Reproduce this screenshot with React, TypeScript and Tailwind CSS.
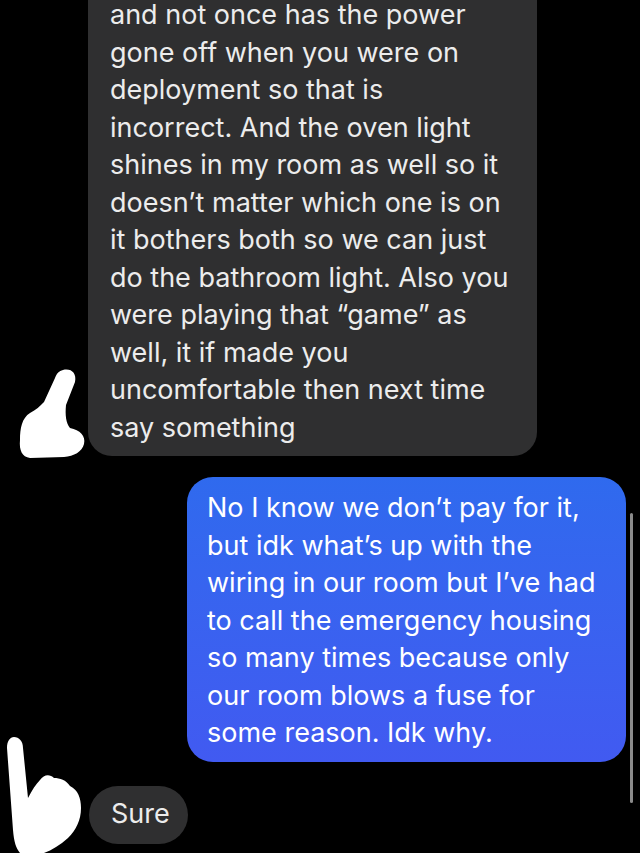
import React from 'react'

const received = [
  'and not once has the power',
  'gone off when you were on',
  'deployment so that is',
  'incorrect. And the oven light',
  'shines in my room as well so it',
  'doesn’t matter which one is on',
  'it bothers both so we can just',
  'do the bathroom light. Also you',
  'were playing that “game” as',
  'well, it if made you',
  'uncomfortable then next time',
  'say something',
]

const sent = [
  'No I know we don’t pay for it,',
  'but idk what’s up with the',
  'wiring in our room but I’ve had',
  'to call the emergency housing',
  'so many times because only',
  'our room blows a fuse for',
  'some reason. Idk why.',
]

function Scribbles() {
  return (
    <svg className="absolute left-0 top-0 pointer-events-none" width="640" height="853" viewBox="0 0 640 853">
      {/* top redaction */}
      <path
        d="M63 370 C71 368 77 373 75 382 L66 405 C65 415 66 423 70 428 C80 430 86 436 84 444 C82 452 74 456 64 457 L30 458 C22 457 19 450 20 440 C20 428 22 418 30 413 C36 410 40 406 44 402 L55 378 C57 373 59 371 63 370 Z"
        fill="#fff"
      />
      {/* bottom redaction */}
      <path
        d="M14 737 C19 737 23 741 23 748 L28 798 C32 790 36 784 40 780 C44 774 50 774 54 778 C60 778 66 780 70 786 C78 790 81 798 81 808 C81 820 76 830 68 838 C60 845 52 850 44 853 L20 853 C16 848 14 842 13 830 L7 748 C7 741 10 737 14 737 Z"
        fill="#fff"
      />
    </svg>
  )
}

export default function App() {
  return (
    <div className="relative w-[640px] h-[853px] overflow-hidden bg-black font-['Inter','Liberation_Sans',sans-serif]">
      <div className="flex flex-col">
        {/* Received bubble, top cut off */}
        <div className="-mt-[4px] ml-[88px] w-[449px] rounded-b-[24px] bg-[#2f2f30] pl-[22px] pr-4 pb-[10px] text-[27px] leading-[37.5px] text-[#ececec]">
          {received.map((l, i) => <div key={i} className="whitespace-nowrap">{l}</div>)}
        </div>

        {/* Sent bubble */}
        <div className="mt-[21px] ml-[187px] w-[439px] rounded-[26px] bg-gradient-to-b from-[#2f6aee] to-[#415af1] pl-[20px] pr-4 pt-[12px] pb-[10px] text-[27px] leading-[37.5px] text-white">
          {sent.map((l, i) => <div key={i} className="whitespace-nowrap">{l}</div>)}
        </div>

        {/* Short reply */}
        <div className="mt-[24px] ml-[89px] flex h-[58px] w-[99px] items-center rounded-full bg-[#2f2f30] pl-[22px] text-[27px] text-[#ececec]">
          Sure
        </div>
      </div>

      {/* scroll indicator */}
      <div className="absolute right-[7px] top-[513px] h-[290px] w-[3px] rounded-full bg-[#8a8a8a]" />

      <Scribbles />
    </div>
  )
}
